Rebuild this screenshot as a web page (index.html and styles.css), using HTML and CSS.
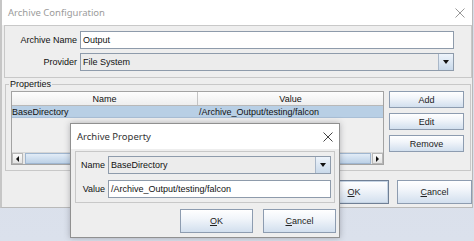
FILE: index.html
```
<!DOCTYPE html>
<html lang="en">
<head>
  <meta charset="UTF-8" />
  <title>Archive Configuration</title>
  <link rel="stylesheet" href="styles.css">
</head>
<body>
  <div class="desktop">

    <div class="window main">
      <div class="titlebar">
        <span class="title">Archive Configuration</span>
        <svg class="close" width="10" height="10" viewBox="0 0 10 10"><path d="M0.5 0.5L9.5 9.5M9.5 0.5L0.5 9.5" stroke="#555" stroke-width="1"/></svg>
      </div>
      <div class="body">
        <div class="panel top-panel">
          <div class="row">
            <label>Archive Name</label>
            <div class="field">Output</div>
          </div>
          <div class="row">
            <label>Provider</label>
            <div class="combo"><span class="combo-text">File System</span><span class="drop"><i></i></span></div>
          </div>
        </div>

        <fieldset class="props">
          <legend>Properties</legend>
          <div class="props-inner">
            <div class="table">
              <div class="thead"><div class="c1">Name</div><div class="c2">Value</div></div>
              <div class="trow selected"><div class="c1">BaseDirectory</div><div class="c2">/Archive_Output/testing/falcon</div></div>
              <div class="tfill"></div>
              <div class="hscroll">
                <span class="sarrow"><i class="left"></i></span>
                <span class="thumb"></span>
                <span class="sarrow"><i class="right"></i></span>
              </div>
            </div>
            <div class="side-buttons">
              <button class="btn">Add</button>
              <button class="btn">Edit</button>
              <button class="btn">Remove</button>
            </div>
          </div>
        </fieldset>

        <div class="footer">
          <button class="btn big ok focus"><u>O</u>K</button>
          <button class="btn big cancel"><u>C</u>ancel</button>
        </div>
      </div>
    </div>

    <div class="window dialog">
      <div class="titlebar">
        <span class="title dark">Archive Property</span>
        <svg class="close" width="10" height="10" viewBox="0 0 10 10"><path d="M0.5 0.5L9.5 9.5M9.5 0.5L0.5 9.5" stroke="#444" stroke-width="1"/></svg>
      </div>
      <div class="body">
        <div class="panel dlg-panel">
          <div class="row">
            <label>Name</label>
            <div class="combo"><span class="combo-text">BaseDirectory</span><span class="drop"><i></i></span></div>
          </div>
          <div class="row">
            <label>Value</label>
            <div class="field">/Archive_Output/testing/falcon</div>
          </div>
        </div>
        <div class="dlg-footer">
          <button class="btn big"><u>O</u>K</button>
          <button class="btn big"><u>C</u>ancel</button>
        </div>
      </div>
    </div>

  </div>
</body>
</html>
```

FILE: styles.css
```
* { box-sizing: border-box; }
body {
  margin: 0;
  width: 474px;
  height: 241px;
  overflow: hidden;
  font-family: "Liberation Sans", Arial, sans-serif;
  font-size: 9px;
  color: #111;
}
.desktop {
  position: relative;
  width: 474px;
  height: 241px;
  background: linear-gradient(#d6dde9, #dbe1ec);
}

/* windows */
.window {
  background: #eeeeee;
  display: flex;
  flex-direction: column;
}
.main {
  width: 473px;
  height: 208px;
  border: 1px solid #b9b9b9;
  border-left: 2px solid #c6c6c6;
  border-top: none;
}
.titlebar {
  height: 25px;
  flex: none;
  background: #fff;
  display: flex;
  align-items: center;
  justify-content: space-between;
  padding: 0 6px 0 6px;
}
.title {
  font-family: "Noto Sans", "Open Sans", sans-serif;
  font-size: 9.5px;
  color: #9b9b9b;
}
.title.dark { color: #333; }
.main .close { margin-right: 1px; opacity: 0.6; }
.body {
  flex: 1;
  display: flex;
  flex-direction: column;
}

/* labelled rows */
.panel {
  border: 1px solid #c8c8c8;
  display: flex;
  flex-direction: column;
  gap: 4px;
}
.row {
  display: flex;
  align-items: center;
}
.row label {
  text-align: right;
  padding-right: 3px;
  flex: none;
}
.field, .combo {
  height: 18px;
  border: 1px solid #8e9bab;
  display: flex;
  align-items: center;
  padding-left: 2px;
  white-space: nowrap;
}
.field { background: #fff; }
.combo { background: #ececec; padding-right: 0; }
.combo-text { flex: 1; }
.drop {
  width: 15px;
  height: 16px;
  border-left: 1px solid #a9b7c8;
  background: linear-gradient(#eef4fb, #c9d9ea);
  display: flex;
  align-items: center;
  justify-content: center;
}
.drop i {
  width: 0;
  height: 0;
  border-left: 3.5px solid transparent;
  border-right: 3.5px solid transparent;
  border-top: 4px solid #111;
}

.top-panel {
  margin: 0 0 0 2px;
  padding: 5px 17px 6px 0;
}
.top-panel label { width: 75px; }
.top-panel .field, .top-panel .combo { flex: 1; }

/* properties group */
.props {
  margin: 1px 1px 0 3px;
  padding: 1px 5px 5px 5px;
  border: 1px solid #c8c8c8;
  min-width: 0;
}
.props legend {
  padding: 0 1px;
  margin-left: -2px;
  line-height: 11px;
}
.props-inner {
  display: flex;
  gap: 5px;
}
.table {
  width: 373px;
  height: 74px;
  border: 1px solid #a3a3a3;
  display: flex;
  flex-direction: column;
  background: #efefef;
}
.thead, .trow {
  display: flex;
  white-space: nowrap;
}
.thead {
  height: 14px;
  background: linear-gradient(#fdfdfd, #eeeeee);
  border-bottom: 1px solid #b8b8b8;
  align-items: center;
}
.thead .c1 { border-right: 1px solid #c4c4c4; height: 100%; display: flex; align-items: center; justify-content: center; }
.thead .c2 { text-align: center; }
.c1 { width: 186px; flex: none; }
.c2 { flex: 1; }
.trow {
  height: 12px;
  align-items: center;
}
.trow .c2 { padding-left: 1px; }
.selected { background: #b8cfe5; border-bottom: 1px solid #a9bfd6; }
.tfill { flex: 1; }
.hscroll {
  height: 12px;
  display: flex;
  align-items: stretch;
  background: #e8e8e8;
  border-top: 1px solid #d6d6d6;
  gap: 1px;
}
.sarrow {
  width: 11px;
  border: 1px solid #b7b7b7;
  background: linear-gradient(#fafafa, #e3e3e3);
  display: flex;
  align-items: center;
  justify-content: center;
}
.sarrow i { width: 0; height: 0; border-top: 3px solid transparent; border-bottom: 3px solid transparent; }
.sarrow .left { border-right: 3px solid #111; }
.sarrow .right { border-left: 3px solid #111; }
.thumb {
  flex: 1;
  margin: 0 0 0 1px;
  border: 1px solid #9fb6d0;
  background: linear-gradient(#e2ecf7, #bcd1e7);
}

.side-buttons {
  display: flex;
  flex-direction: column;
  gap: 5px;
  padding-top: 0;
}

/* buttons */
.btn {
  font-family: "Liberation Sans", Arial, sans-serif;
  font-size: 9px;
  width: 75px;
  height: 17px;
  border: 1px solid #8d9cb0;
  background: linear-gradient(#ffffff 0%, #f1f5fa 40%, #d2dfee 100%);
  color: #222;
  padding: 0;
  display: flex;
  align-items: center;
  justify-content: center;
}
.btn u { text-decoration-thickness: 1px; text-underline-offset: 1px; }
.btn.big { height: 24px; }
.btn.focus { border: 1px solid #6f7f95; box-shadow: inset 0 0 0 1px #c6d4e4; }

.footer {
  display: flex;
  justify-content: flex-end;
  gap: 8px;
  padding: 9px 0 0 0;
}
.footer .ok { width: 70px; }
.footer .cancel { width: 75px; }

/* dialog on top */
.dialog {
  position: absolute;
  left: 70px;
  top: 123px;
  width: 270px;
  height: 115px;
  border: 1px solid #909090;
  box-shadow: 0 0 6px rgba(60, 60, 70, 0.35);
}
.dlg-panel {
  margin: 2px 4px 0 4px;
  padding: 4px 3px 4px 0;
  gap: 6px;
}
.dlg-panel label { width: 32px; }
.dlg-panel .field, .dlg-panel .combo { flex: 1; }
.dlg-panel .drop { border-left-color: #a9b7c8; }
.dlg-footer {
  display: flex;
  justify-content: flex-end;
  gap: 10px;
  padding: 6px 3px 0 0;
}
.dlg-footer .btn { width: 73px; }
```
